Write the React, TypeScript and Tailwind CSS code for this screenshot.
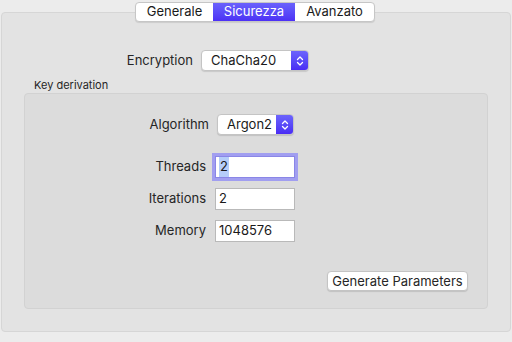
import React from 'react';

const FONT = { fontFamily: '"Inter", "Liberation Sans", sans-serif' };

function Chevrons() {
  return (
    <svg width="8" height="12" viewBox="0 0 8 12" fill="none">
      <path d="M1.5 4.5 L4 2 L6.5 4.5" stroke="white" strokeWidth="1.3" strokeLinecap="round" strokeLinejoin="round" />
      <path d="M1.5 7.5 L4 10 L6.5 7.5" stroke="white" strokeWidth="1.3" strokeLinecap="round" strokeLinejoin="round" />
    </svg>
  );
}

function Popup({ value, width }: { value: string; width: string }) {
  return (
    <div
      className={`flex h-[21px] ${width} items-stretch overflow-hidden rounded-[4px] border border-[#c4c4c4] bg-white shadow-[0_1px_1px_rgba(0,0,0,0.12)]`}
    >
      <div className="flex flex-1 items-center pl-[9px] text-[13px] text-[#1a1a1a]">{value}</div>
      <div className="flex w-[17px] items-center justify-center bg-gradient-to-b from-[#6c63fc] to-[#4a2bf4]">
        <Chevrons />
      </div>
    </div>
  );
}

function Field({ label, value, focused }: { label: string; value: string; focused?: boolean }) {
  return (
    <div className="flex items-center">
      <div className="w-[190px] pr-[9px] text-right text-[13px] text-[#262626]">{label}</div>
      <div
        className={`flex h-[22px] w-[80px] items-center border bg-white pl-[3px] text-[13px] text-[#1a1a1a] ${
          focused ? 'border-[#8a86e6] shadow-[0_0_0_3px_#a19ef0]' : 'border-[#b9b9b9]'
        }`}
      >
        {focused ? <span className="bg-[#b5cdfa] px-[1px]">{value}</span> : value}
      </div>
    </div>
  );
}

export default function App() {
  return (
    <div className="relative h-[342px] w-[512px] overflow-hidden bg-[#ececec] pt-[12px]" style={FONT}>
      {/* Tab bar */}
      <div className="absolute left-[135px] top-[2px] z-10 flex h-[20px] overflow-hidden rounded-[4px] border border-[#c6c6c6] bg-white text-[13px] shadow-[0_1px_1px_rgba(0,0,0,0.1)]">
        <div className="flex w-[77px] items-center justify-center text-[#1a1a1a]">Generale</div>
        <div className="flex w-[82px] items-center justify-center bg-gradient-to-b from-[#6a61fc] to-[#4d30f5] text-white">
          Sicurezza
        </div>
        <div className="flex w-[79px] items-center justify-center text-[#1a1a1a]">Avanzato</div>
      </div>

      {/* Panel */}
      <div className="mx-[1px] flex h-[320px] flex-col rounded-[4px] border border-[#d6d6d6] bg-[#e3e3e3]">
        <div className="mt-[37px] flex items-center">
          <div className="w-[199px] pr-[8px] text-right text-[13px] text-[#262626]">Encryption</div>
          <Popup value="ChaCha20" width="w-[108px]" />
        </div>

        <div className="ml-[32px] mt-[7px] h-[14px] text-[11px] leading-[14px] text-[#262626]">Key derivation</div>

        <div className="mx-[22px] mt-[1px] flex h-[216px] flex-col rounded-[4px] border border-[#d2d2d2] bg-[#dcdcdc]">
          <div className="mt-[20px] flex items-center">
            <div className="w-[192px] pr-[8px] text-right text-[13px] text-[#262626]">Algorithm</div>
            <Popup value="Argon2" width="w-[77px]" />
          </div>

          <div className="mt-[21px] flex flex-col gap-[10px]">
            <Field label="Threads" value="2" focused />
            <Field label="Iterations" value="2" />
            <Field label="Memory" value="1048576" />
          </div>

          <div className="mr-[19px] mt-[29px] flex justify-end">
            <button className="h-[20px] w-[141px] rounded-[4px] border border-[#c4c4c4] bg-white text-[13px] text-[#262626] shadow-[0_1px_1px_rgba(0,0,0,0.12)]">
              Generate Parameters
            </button>
          </div>
        </div>
      </div>
    </div>
  );
}
